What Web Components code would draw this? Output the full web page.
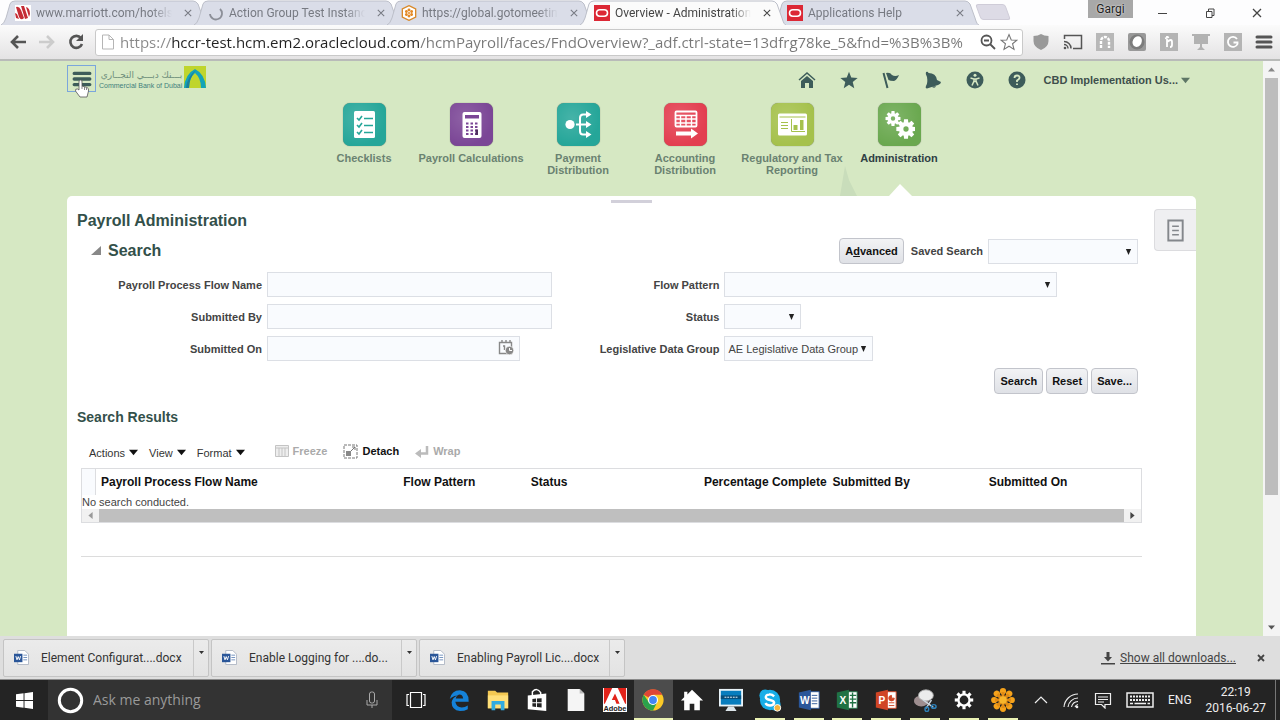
<!DOCTYPE html>
<html lang="en">
<head>
<meta charset="utf-8">
<title>Overview - Administration</title>
<style>
    html, body {
        height: 100%;
        margin: 0px;
    }
    body {
        font: 11px/12px "Liberation Sans", Arial, sans-serif;
        color: #444;
        --ui-font: Roboto, "Noto Sans", sans-serif;
        --input-font: "Open Sans", "Noto Sans", sans-serif;
    }
</style>
</head>
<body>
<payroll-screen></payroll-screen>

<template id="template-payroll-screen">
    <style>
        :host {
            display: flex;
            flex-direction: column;
            height: 100vh;
            overflow: hidden;
        }
        .tabs {
            display: flex;
            flex: none;
            height: 25px;
            background: #fdfdfe;
            font: 12px/16px var(--ui-font);
        }
        .new-tab {
            width: 28px;
            height: 14px;
            margin: 4px 0px 0px 12px;
            border: 1px solid #cfccd8;
            border-radius: 3px;
            background: #dddbe6;
            transform: skewX(20deg);
        }
        .profile {
            width: 45px;
            height: 18px;
            margin-left: auto;
            border: 0px;
            padding: 0px;
            background: #a8a8a8;
            color: #222;
            font: 12px/18px var(--ui-font);
            text-shadow: 0px 0px 2px #fff;
        }
        .window {
            display: flex;
            justify-content: space-around;
            align-items: center;
            width: 140px;
            padding-left: 7px;
        }
        .main {
            display: flex;
            flex: 1;
            min-height: 0px;
            background: #d6e8c3;
        }
        .page {
            flex: 1;
            display: flex;
            flex-direction: column;
            min-width: 0px;
            padding: 0px 67px;
        }
        nav {
            position: relative;
            display: flex;
            justify-content: center;
            flex: none;
            height: 93px;
            padding-top: 4px;
        }
        .shelf {
            display: flex;
            align-items: center;
            flex: none;
            gap: 2px;
            height: 43px;
            padding: 0px 14px 0px 3px;
            border-bottom: 1px solid #8b8b8b;
            background: #dedede;
            font: 12px/16px var(--ui-font);
        }
        .shelf a {
            display: flex;
            gap: 5px;
            align-items: center;
            margin-left: auto;
            margin-right: 18px;
            color: #444;
        }
    </style>
    <div class="tabs">
        <browser-tab icon="marriott">www.marriott.com/hotels/</browser-tab>
        <browser-tab icon="spinner">Action Group Test Instance</browser-tab>
        <browser-tab icon="flower">https://global.gotomeeting</browser-tab>
        <browser-tab icon="oracle" active>Overview - Administration</browser-tab>
        <browser-tab icon="oracle">Applications Help</browser-tab>
        <div class="new-tab"></div>
        <button class="profile">Gargi</button>
        <div class="window">
            <ui-icon name="minimize" size="10"></ui-icon>
            <ui-icon name="restore" size="10"></ui-icon>
            <ui-icon name="close" size="10"></ui-icon>
        </div>
    </div>
    <browser-toolbar></browser-toolbar>
    <div class="main">
        <div class="page">
            <global-header></global-header>
            <nav>
                <spring-item icon="checklist" color="#25a699">Checklists</spring-item>
                <spring-item icon="calculator" color="#7b4696">Payroll Calculations</spring-item>
                <spring-item icon="payment" color="#25a699">Payment Distribution</spring-item>
                <spring-item icon="accounting" color="#e33e50">Accounting Distribution</spring-item>
                <spring-item icon="reporting" color="#a5c14c">Regulatory and Tax Reporting</spring-item>
                <spring-item icon="gears" color="#6aa84f" active>Administration</spring-item>
            </nav>
            <work-panel></work-panel>
        </div>
        <page-scrollbar></page-scrollbar>
    </div>
    <div class="shelf">
        <download-item>Element Configurat....docx</download-item>
        <download-item>Enable Logging for ....do...</download-item>
        <download-item>Enabling Payroll Lic....docx</download-item>
        <a href="#downloads"><ui-icon name="download" size="14"></ui-icon>Show all downloads...</a>
        <ui-icon name="closeBold" size="10"></ui-icon>
    </div>
    <task-bar></task-bar>
</template>

<template id="template-browser-tab">
    <style>
        :host {
            display: grid;
            flex: 0 1 206px;
            min-width: 0px;
            margin-right: -13px;
            color: #777a82;
            --tab: #dadde8;
        }
        :host(:first-child) {
            margin-left: 1px;
        }
        :host([active]) {
            z-index: 1;
            color: #444;
            --tab: #fbfbfb;
        }
        :host > * {
            grid-area: 1 / 1;
        }
        .shape {
            width: 100%;
            height: 25px;
            fill: var(--tab);
            stroke: #bcbfc9;
        }
        .body {
            display: flex;
            align-items: center;
            gap: 5px;
            min-width: 0px;
            padding: 0px 15px 0px 14px;
        }
        .title {
            flex: 1;
            overflow: hidden;
            white-space: nowrap;
            margin-right: 7px;
            mask-image: linear-gradient(to left, transparent, #000 20px);
        }
    </style>
    <svg class="shape" viewBox="0 0 206 25" preserveAspectRatio="none">
        <path d="M0 25Q3 24 5 18L9 4Q10 1 14 1H192Q195 1 197 4L202 18Q204 25 206 25"/>
    </svg>
    <div class="body">
        <ui-icon size="16"></ui-icon>
        <span class="title"><slot></slot></span>
        <ui-icon name="close" size="8"></ui-icon>
    </div>
</template>

<template id="template-browser-toolbar">
    <style>
        :host {
            display: flex;
            align-items: center;
            flex: none;
            box-sizing: border-box;
            height: 36px;
            padding: 0px 7px 0px 9px;
            border-bottom: 2px solid #b9bbb9;
            background: linear-gradient(#fbfbfb, #e4e3e4);
            color: #555;
        }
        .keys, .tools {
            display: flex;
            align-items: center;
        }
        .keys {
            gap: 11px;
            width: 86px;
        }
        .box {
            display: flex;
            align-items: center;
            flex: 1;
            gap: 4px;
            height: 25px;
            padding: 0px 4px;
            border: 1px solid #c9c9c9;
            border-radius: 3px;
            background: #fff;
        }
        input {
            flex: 1;
            min-width: 0px;
            border: 0px;
            padding: 0px;
            outline: 0px;
            font: 15px/24px var(--input-font);
            color: #777;
            -webkit-text-fill-color: transparent;
            background: linear-gradient(to right, #888 51px, #222 51px, #222 300px, #777 300px);
            -webkit-background-clip: text;
            background-clip: text;
        }
        .tools {
            gap: 12px;
            margin-left: 8px;
        }
    </style>
    <div class="keys">
        <ui-icon name="back" size="18"></ui-icon>
        <ui-icon name="forward" size="18"></ui-icon>
        <ui-icon name="reload" size="18"></ui-icon>
    </div>
    <div class="box">
        <ui-icon name="file" size="16"></ui-icon>
        <input aria-label="Address" spellcheck="false" value="https://hccr-test.hcm.em2.oraclecloud.com/hcmPayroll/faces/FndOverview?_adf.ctrl-state=13dfrg78ke_5&amp;fnd=%3B%3B%">
        <ui-icon name="zoom" size="16"></ui-icon>
        <ui-icon name="starOutline" size="18"></ui-icon>
    </div>
    <div class="tools">
        <ui-icon name="shield" size="20"></ui-icon>
        <ui-icon name="cast" size="20"></ui-icon>
        <ui-icon name="extMagnet" size="20"></ui-icon>
        <ui-icon name="extEgg" size="20"></ui-icon>
        <ui-icon name="extHoney" size="20"></ui-icon>
        <ui-icon name="extBoard" size="20"></ui-icon>
        <ui-icon name="extGrammar" size="20"></ui-icon>
        <ui-icon name="menu" size="18"></ui-icon>
    </div>
</template>

<template id="template-global-header">
    <style>
        :host {
            position: relative;
            display: flex;
            align-items: center;
            flex: none;
            height: 38px;
            color: #3d5c5a;
        }
        button {
            border: 0px;
            padding: 0px;
            background: none;
            color: inherit;
            font: inherit;
        }
        .menu {
            display: flex;
            align-items: center;
            justify-content: center;
            width: 29px;
            height: 27px;
            margin: 0px 3px 3px 0px;
            border: 1px solid #7ba6dc;
        }
        .bank {
            margin-right: 2px;
            text-align: right;
            font-size: 7px;
            line-height: 9px;
            color: #3f7f7c;
        }
        .bank span {
            display: block;
            font: 9px/11px "DejaVu Sans", sans-serif;
            color: #6f8f7c;
        }
        .bank-mark {
            margin-bottom: 6px;
        }
        .links {
            display: flex;
            gap: 24px;
            margin-left: auto;
        }
        .user {
            display: flex;
            align-items: center;
            gap: 3px;
            margin: 0px 6px 0px 18px;
            font-weight: bold;
            color: #3e4f4c;
        }
        .user ui-icon {
            color: #5e7666;
        }
        .pointer {
            position: absolute;
            left: 6px;
            top: 18px;
        }
    </style>
    <button class="menu" aria-label="Navigator"><ui-icon name="menu" size="20"></ui-icon></button>
    <div class="bank"><span lang="ar" dir="rtl">بـــنك دبـــي التجــاري</span>Commercial Bank of Dubai</div>
    <ui-icon class="bank-mark" name="bank" size="22"></ui-icon>
    <div class="links">
        <ui-icon name="home" size="18"></ui-icon>
        <ui-icon name="star" size="18"></ui-icon>
        <ui-icon name="flag" size="18"></ui-icon>
        <ui-icon name="bell" size="18"></ui-icon>
        <ui-icon name="access" size="18"></ui-icon>
        <ui-icon name="help" size="18"></ui-icon>
    </div>
    <button class="user">CBD Implementation Us...<ui-icon name="down" size="9"></ui-icon></button>
    <ui-icon class="pointer" name="hand" size="19"></ui-icon>
</template>

<template id="template-spring-item">
    <style>
        :host {
            position: relative;
            display: flex;
            flex-direction: column;
            align-items: center;
            width: 107px;
            font-weight: bold;
            color: #6a8271;
        }
        :host([active]) {
            color: #2f4044;
        }
        .tile {
            display: grid;
            place-items: center;
            width: 43px;
            height: 43px;
            margin-bottom: 6px;
            border-radius: 7px;
            background: radial-gradient(circle at 35% 35%, rgba(255, 255, 255, 0.15), transparent 70%) var(--tile);
            box-shadow: 0px 0px 1px rgba(0, 0, 0, 0.5);
            color: #fff;
        }
        a {
            color: inherit;
            text-align: center;
            text-decoration: none;
        }
        .marker {
            display: none;
        }
        :host([active]) .marker {
            display: block;
            position: absolute;
            left: 0px;
            bottom: 0px;
            width: 66px;
            height: 32px;
            overflow: visible;
        }
    </style>
    <div class="tile"><ui-icon size="31"></ui-icon></div>
    <a href="#item"><slot></slot></a>
    <svg class="marker" viewBox="0 0 66 32">
        <path d="M-6 32L-1 2L3 16L11 32Z" fill="#c9ddbb"/>
        <path d="M43 32L54 20L66 32Z" fill="#fff"/>
    </svg>
</template>

<template id="template-work-panel">
    <style>
        :host {
            position: relative;
            display: block;
            flex: 1;
            padding: 15px 54px 0px 10px;
            border-radius: 5px 5px 0px 0px;
            background: #fff;
        }
        h1, h2, h3 {
            margin: 0px;
            color: #33504a;
            font-size: 16px;
            line-height: 20px;
        }
        h3 {
            font-size: 14px;
            margin-top: 13px;
        }
        .grip {
            position: absolute;
            left: calc(50% - 21px);
            top: 4px;
            width: 41px;
            height: 3px;
            background: #d2d0da;
        }
        .drawer {
            position: absolute;
            right: 0px;
            top: 13px;
            display: grid;
            place-items: center;
            width: 42px;
            height: 42px;
            border: 1px solid #dcdcdf;
            border-right: 0px;
            border-radius: 4px 0px 0px 4px;
            padding: 0px;
            background: #efeff1;
            color: #84878c;
        }
        .head {
            display: flex;
            align-items: center;
            margin: 7px 4px 8px 14px;
        }
        .head h2 {
            flex: 1;
            margin-left: 6px;
        }
        .head ui-button {
            margin-right: 7px;
        }
        form {
            display: grid;
            grid-template-columns: 45% 55%;
            row-gap: 7px;
            margin-right: 4px;
        }
        .left {
            --label: 185px;
        }
        .right {
            --label: 165px;
        }
        .actions {
            display: flex;
            justify-content: flex-end;
            gap: 3px;
            margin: 7px 4px 0px 0px;
        }
    </style>
    <div class="grip"></div>
    <button class="drawer" aria-label="Tasks"><ui-icon name="tasks" size="23"></ui-icon></button>
    <h1>Payroll Administration</h1>
    <div class="head">
        <ui-icon name="disclosed" size="11"></ui-icon>
        <h2>Search</h2>
        <ui-button>A<u>d</u>vanced</ui-button>
        <form-field type="select" label="Saved Search" width="150"></form-field>
    </div>
    <form>
        <form-field class="left" label="Payroll Process Flow Name" width="285"></form-field>
        <form-field class="right" type="select" label="Flow Pattern" width="333"></form-field>
        <form-field class="left" label="Submitted By" width="285"></form-field>
        <form-field class="right" type="select" label="Status" width="77"></form-field>
        <form-field class="left" type="date" label="Submitted On" width="253"></form-field>
        <form-field class="right" type="select" label="Legislative Data Group" value="AE Legislative Data Group" width="149"></form-field>
    </form>
    <div class="actions">
        <ui-button>Search</ui-button>
        <ui-button>Reset</ui-button>
        <ui-button>Save...</ui-button>
    </div>
    <h3>Search Results</h3>
    <results-table></results-table>
</template>

<template id="template-ui-button">
    <style>
        :host {
            display: block;
        }
        button {
            height: 26px;
            border: 1px solid #c2c4cb;
            border-radius: 4px;
            padding: 0px 5px;
            background: linear-gradient(#f2f3f5, #dfe1e6);
            color: #111;
            font: bold 11px/12px "Liberation Sans", Arial, sans-serif;
        }
    </style>
    <button type="button"><slot></slot></button>
</template>

<template id="template-form-field">
    <style>
        :host {
            display: grid;
            grid-template-columns: var(--label, auto) auto;
            justify-content: start;
            align-items: center;
            column-gap: 5px;
        }
        label {
            text-align: right;
            font-weight: bold;
            white-space: nowrap;
        }
        .control {
            display: grid;
            align-items: center;
            justify-items: end;
        }
        .control > * {
            grid-area: 1 / 1;
        }
        input, select {
            box-sizing: border-box;
            width: 100%;
            height: 25px;
            margin: 0px;
            border: 1px solid #dcdfe5;
            border-radius: 0px;
            padding: 0px 3px;
            outline: 0px;
            appearance: none;
            background: #f9fbfe;
            color: #444;
            font: inherit;
        }
        ui-icon {
            pointer-events: none;
            margin-right: 6px;
            color: #222;
        }
        input + ui-icon {
            margin-bottom: 3px;
            color: #888;
        }
    </style>
    <label for="control"></label>
    <div class="control"></div>
</template>

<template id="template-results-table">
    <style>
        :host {
            display: block;
            margin-left: 4px;
            padding-bottom: 33px;
            border-bottom: 1px solid #dcdcdc;
        }
        .bar {
            display: flex;
            align-items: center;
            height: 41px;
            padding-left: 8px;
        }
        .menus {
            display: flex;
            gap: 11px;
            padding-top: 10px;
        }
        .tools {
            display: flex;
            gap: 16px;
            margin-left: 30px;
            padding-top: 7px;
        }
        button {
            display: flex;
            align-items: center;
            gap: 4px;
            border: 0px;
            padding: 0px;
            background: none;
            color: #333;
            font: inherit;
        }
        .menus ui-icon {
            color: #111;
        }
        .tools button {
            font-weight: bold;
            color: #111;
        }
        .tools ui-icon {
            color: #777;
        }
        .tools button:disabled {
            color: #aaa;
        }
        .frame {
            border: 1px solid #dcdde0;
        }
        table {
            width: 100%;
            table-layout: fixed;
            border-collapse: collapse;
        }
        th {
            height: 26px;
            padding: 0px 5px;
            text-align: left;
            white-space: nowrap;
            font-size: 12px;
            color: #111;
        }
        th:first-child {
            width: 3px;
            border-right: 1px solid #dcdde0;
            background: #f9fbfe;
        }
        td {
            height: 14px;
            padding: 0px;
        }
        .scroll {
            display: flex;
            align-items: center;
            height: 13px;
            background: #f1f1f1;
        }
        .scroll div {
            flex: 1;
            height: 13px;
            background: #bfbfbf;
        }
        .scroll ui-icon {
            margin: 0px 5px;
        }
        .dim {
            opacity: 0.5;
        }
    </style>
    <div class="bar">
        <div class="menus">
            <button>Actions<ui-icon name="down" size="9"></ui-icon></button>
            <button>View<ui-icon name="down" size="9"></ui-icon></button>
            <button>Format<ui-icon name="down" size="9"></ui-icon></button>
        </div>
        <div class="tools">
            <button disabled><ui-icon name="freeze" size="14"></ui-icon>Freeze</button>
            <button><ui-icon name="detach" size="15"></ui-icon>Detach</button>
            <button disabled><ui-icon name="wrap" size="14"></ui-icon>Wrap</button>
        </div>
    </div>
    <div class="frame">
        <table>
            <thead>
                <tr>
                    <th></th>
                    <th style="width: 27.6%">Payroll Process Flow Name</th>
                    <th style="width: 11.1%">Flow Pattern</th>
                    <th style="width: 15.4%">Status</th>
                    <th style="width: 11.2%">Percentage Complete</th>
                    <th style="width: 13.8%">Submitted By</th>
                    <th>Submitted On</th>
                </tr>
            </thead>
            <tbody>
                <tr><td colspan="7">No search conducted.</td></tr>
            </tbody>
        </table>
        <div class="scroll">
            <ui-icon class="dim" name="left" size="7"></ui-icon>
            <div></div>
            <ui-icon name="right" size="7"></ui-icon>
        </div>
    </div>
</template>

<template id="template-page-scrollbar">
    <style>
        :host {
            display: flex;
            flex-direction: column;
            align-items: center;
            justify-content: space-between;
            width: 17px;
            background: #f4f4f4;
            color: #555;
        }
        ui-icon {
            margin: 5px 0px;
        }
        .track {
            flex: 1;
        }
        .thumb {
            width: 13px;
            height: 77%;
            background: #bdbdbd;
        }
    </style>
    <ui-icon name="up" size="7"></ui-icon>
    <div class="track"><div class="thumb"></div></div>
    <ui-icon name="down" size="7"></ui-icon>
</template>

<template id="template-download-item">
    <style>
        :host {
            display: flex;
            box-sizing: border-box;
            width: 206px;
            height: 38px;
            border: 1px solid #c4c4c4;
            border-radius: 2px;
            background: linear-gradient(#ebebeb, #e3e3e3);
        }
        button {
            display: flex;
            align-items: center;
            border: 0px;
            padding: 0px;
            background: none;
            color: #333;
            font: inherit;
        }
        .file {
            flex: 1;
            gap: 12px;
            padding-left: 10px;
            white-space: nowrap;
        }
        .more {
            align-items: flex-start;
            justify-content: center;
            width: 15px;
            padding-top: 10px;
            border-left: 1px solid #c9c9c9;
        }
    </style>
    <button class="file"><ui-icon name="docx" size="15"></ui-icon><slot></slot></button>
    <button class="more" aria-label="More"><ui-icon name="down" size="5"></ui-icon></button>
</template>

<template id="template-task-bar">
    <style>
        :host {
            display: flex;
            flex: none;
            height: 40px;
            background: #242424;
            color: #eee;
            font: 12px/16px var(--ui-font);
        }
        .start, .view {
            display: grid;
            place-items: center;
            width: 48px;
            border: 0px;
            padding: 0px;
            background: none;
            color: #fff;
        }
        .search {
            display: flex;
            align-items: center;
            gap: 9px;
            box-sizing: border-box;
            width: 344px;
            padding: 0px 11px 0px 9px;
            background: #333;
            color: #aaa;
        }
        input {
            flex: 1;
            min-width: 0px;
            border: 0px;
            padding: 0px;
            outline: 0px;
            background: none;
            color: #fff;
            font: 14px/20px var(--input-font);
        }
        input::placeholder {
            color: #9a9a9a;
        }
        .apps {
            display: flex;
            flex: 1;
        }
        .tray {
            display: flex;
            align-items: center;
            box-sizing: border-box;
            width: 258px;
            padding-left: 12px;
        }
        .tray ui-icon + ui-icon {
            margin-left: 14px;
        }
        .lang {
            margin-left: 14px;
        }
        .clock {
            margin-left: auto;
            padding-right: 9px;
            text-align: center;
        }
        .edge {
            width: 4px;
            height: 100%;
            border-left: 1px solid #777;
        }
    </style>
    <button class="start" aria-label="Start"><ui-icon name="windows" size="17"></ui-icon></button>
    <div class="search">
        <ui-icon name="cortana" size="27"></ui-icon>
        <input aria-label="Ask me anything" placeholder="Ask me anything">
        <ui-icon name="mic" size="18"></ui-icon>
    </div>
    <button class="view" aria-label="Task view"><ui-icon name="taskView" size="20"></ui-icon></button>
    <div class="apps">
        <task-button icon="edge"></task-button>
        <task-button icon="folder"></task-button>
        <task-button icon="store"></task-button>
        <task-button icon="blank"></task-button>
        <task-button icon="adobe"></task-button>
        <task-button icon="chrome" current running></task-button>
        <task-button icon="house"></task-button>
        <task-button icon="lenovo"></task-button>
        <task-button icon="skype" running></task-button>
        <task-button icon="word" running></task-button>
        <task-button icon="excel" running></task-button>
        <task-button icon="powerpoint" running></task-button>
        <task-button icon="snip" running></task-button>
        <task-button icon="settings" running></task-button>
        <task-button icon="meeting" running></task-button>
    </div>
    <div class="tray">
        <ui-icon name="chevron" size="14"></ui-icon>
        <ui-icon name="wifi" size="18"></ui-icon>
        <ui-icon name="message" size="18"></ui-icon>
        <ui-icon name="keyboard" size="28"></ui-icon>
        <span class="lang">ENG</span>
        <div class="clock">22:19<br>2016-06-27</div>
        <div class="edge"></div>
    </div>
</template>

<template id="template-task-button">
    <style>
        :host {
            display: flex;
            flex: 1;
        }
        button {
            display: flex;
            flex: 1;
            flex-direction: column;
            align-items: center;
            justify-content: space-between;
            border: 0px;
            padding: 8px 0px 0px;
            background: none;
        }
        :host([current]) button {
            background: #4c4c4c;
        }
        .line {
            width: 30px;
            height: 2px;
        }
        :host([current]) .line {
            width: 100%;
        }
        :host([running]) .line {
            background: #eaf2b4;
        }
    </style>
    <button><ui-icon size="24"></ui-icon><div class="line"></div></button>
</template>

<script>
    (function() {
        // name: [viewBox, markup]
        const office = (color, letter, page) => ['0 0 26 26', `<path d="M13 4H24V22H13Z" fill="#fff" stroke="${color}"/>${page}<path d="M2 5L15 2V24L2 21Z" fill="${color}"/><text x="8.5" y="17" font-family="Liberation Sans" font-weight="bold" font-size="11" text-anchor="middle" fill="#fff">${letter}</text>`];
        const petals = (count, markup) => Array.from({ length: count }, (_, i) => `<g transform="rotate(${i * 360 / count} 12 12)">${markup}</g>`).join('');
        const gear = (x, y, s, hole) => `<g transform="translate(${x} ${y}) scale(${s}) translate(-12 -12)">${petals(8, '<path d="M9.8 1H14.2L14.8 7H9.2Z"/>')}<circle cx="12" cy="12" r="5.5" fill="none" stroke="currentColor" stroke-width="${hole}"/></g>`;
        const line = 'fill="none" stroke="currentColor"';
        const ICONS = {
            marriott: ['0 0 16 16', '<path d="M0 0H16V16H0Z" fill="#fff"/><path d="M1 2Q4 1 6 5L9 13Q6 16 4 12ZM6 1L9 1L13 13L10 14ZM11 2Q15 3 15 9L14 12Z" fill="#c52b35"/><path d="M0 8L2 9L4 14L1 13Z" fill="#c52b35"/>'],
            spinner: ['0 0 16 16', '<path d="M2 9A6 6 0 1 0 12 4" fill="none" stroke="#8c8f98" stroke-width="1.8"/>'],
            flower: ['0 0 24 24', `<path d="M12 1L22 6V18L12 23L2 18V6Z" fill="#fff" stroke="#d98a2b" stroke-width="2"/>${petals(6, '<circle cx="12" cy="7.5" r="2.2" fill="#e58a25"/>')}<circle cx="12" cy="12" r="1.5" fill="#e58a25"/>`],
            oracle: ['0 0 16 16', '<path d="M0 0H16V16H0Z" fill="#dc2835"/><rect x="2.5" y="4.7" width="11" height="6.6" rx="3.3" fill="none" stroke="#fff" stroke-width="1.6"/>'],
            minimize: ['0 0 10 10', `<path d="M0 5.5H9" ${line}/>`],
            restore: ['0 0 10 10', `<path d="M1.5 3.5H7V9.5H1.5ZM3.5 3V1H9V7.5H7" ${line}/>`],
            close: ['0 0 10 10', `<path d="M1 1L9 9M9 1L1 9" ${line} stroke-width="1.3"/>`],
            closeBold: ['0 0 10 10', `<path d="M2 2L8 8M8 2L2 8" ${line} stroke-width="1.8"/>`],
            back: ['0 0 18 18', `<path d="M17 9H3M9 3L3 9L9 15" ${line} stroke-width="2.6"/>`],
            forward: ['0 0 18 18', '<path d="M1 9H15M9 3L15 9L9 15" fill="none" stroke="#ccc" stroke-width="2.6"/>'],
            reload: ['0 0 18 18', `<path d="M14 5A6 6 0 1 0 15 11" ${line} stroke-width="2.6"/><path d="M16 1V8H9Z"/>`],
            file: ['0 0 16 16', '<path d="M2.5 1H9L13.5 5.5V15H2.5ZM9 1V5.5H13.5" fill="#fff" stroke="#b5b5b5"/>'],
            zoom: ['0 0 16 16', `<circle cx="6.5" cy="6.5" r="5" ${line} stroke-width="1.8"/><path d="M10 10L15 15M4 6.5H9" ${line} stroke-width="1.8"/>`],
            starOutline: ['0 0 24 24', '<path d="M12 2L15 9.2L22.5 9.6L16.7 14.3L18.7 21.8L12 17.6L5.3 21.8L7.3 14.3L1.5 9.6L9 9.2Z" fill="none" stroke="#777" stroke-width="1.4"/>'],
            shield: ['0 0 20 20', '<path d="M10 2Q13 4 17.5 4V9Q17.500 15 10 18Q2.500 15 2.500 9V4Q7 4 10 2Z" fill="#999"/>'],
            cast: ['0 0 20 20', `<path d="M1.500 7V3.500H18.500V16.500H10" ${line} stroke-width="1.500"/><path d="M1 9.500A7 7 0 0 1 8 16.500M1 12.500A4 4 0 0 1 5 16.500" ${line} stroke-width="1.500"/><circle cx="2" cy="16" r="1.300"/>`],
            extMagnet: ['0 0 20 20', '<path d="M1 1H19V19H1Z" fill="#b8b8b8"/><path d="M6 16V9A4 4 0 0 1 14 9V16" fill="none" stroke="#fff" stroke-width="2.400" stroke-dasharray="3 1"/>'],
            extEgg: ['0 0 20 20', '<rect x="1" y="1" width="18" height="18" rx="2" fill="#999"/><circle cx="10" cy="10" r="7.500" fill="#7c7c7c"/><ellipse cx="10" cy="9.500" rx="4.500" ry="5.500" fill="#fff" transform="rotate(25 10 10)"/>'],
            extHoney: ['0 0 20 20', '<path d="M1 1H19V19H1Z" fill="#b4b4b4"/><path d="M8 4V15M6 6.500L10 5M8 10Q13 6 13 10V13Q13 15 11 15" fill="none" stroke="#fff" stroke-width="1.800"/>'],
            extBoard: ['0 0 20 20', '<path d="M1 2H19V4H17V12H11V15L14 18H6L9 15V12H3V4H1Z" fill="#b2b2b2"/>'],
            extGrammar: ['0 0 20 20', '<path d="M1 1H19V19H1Z" fill="#b4b4b4"/><path d="M14 7A5 5 0 1 0 14.500 12V10.500H10.500" fill="none" stroke="#fff" stroke-width="1.800"/>'],
            menu: ['0 0 18 18', `<path d="M2 4H16M2 9H16M2 14H16" ${line} stroke-width="3" stroke-linecap="round"/>`],
            bank: ['0 0 22 22', '<path d="M0 0H22V22H0Z" fill="#bfd52d"/><path d="M0 22Q1 8 11 3Q21 8 22 22H17Q17 12 11 7Q5 12 5 22Z" fill="#13a3b8"/><path d="M2 22Q3 11 12 4Q5 12 5 22Z" fill="#1a7f9c"/>'],
            home: ['0 0 18 18', `<path d="M1 9L9 2L17 9" ${line} stroke-width="1.500"/><path d="M3 10L9 5L15 10V17H11V12H7V17H3Z"/>`],
            star: ['0 0 24 24', '<path d="M12 1L15 8.700L23.500 9.200L17 14.500L19 23L12 18.300L5 23L7 14.500L.5 9.200L9 8.700Z"/>'],
            flag: ['0 0 18 18', `<path d="M1.500 2L5.500 17" ${line} stroke-width="2"/><path d="M4 2Q8 1 10 4Q13 6 17 4Q15 9 12 10Q8 10 6.500 9Z"/>`],
            bell: ['0 0 18 18', '<path d="M2 1Q4 0 4.500 2Q12 2 13 9L17 11Q17 13 14 14L3 17.500Q1 17 2 15Q4 12 3 6Q1 3 2 1ZM8 16L12 15Q11 18 8 16Z"/>'],
            access: ['0 0 18 18', '<circle cx="9" cy="9" r="8.500"/><circle cx="9" cy="4.300" r="1.500" fill="#d6e8c3"/><path d="M4.500 7L8 8V10L6 14.500M13.500 7L10 8V10L12 14.500M8 8H10V10.500H8Z" fill="none" stroke="#d6e8c3" stroke-width="1.500"/>'],
            help: ['0 0 18 18', '<circle cx="9" cy="9" r="8.500"/><path d="M6.500 7Q6.500 4.500 9 4.500Q11.700 4.500 11.500 7Q11 8.500 9 9.500V11M9 12.500V14" fill="none" stroke="#d6e8c3" stroke-width="1.800"/>'],
            down: ['0 0 10 10', '<path d="M0 2H10L5 8Z"/>'],
            select: ['0 0 8 8', '<path d="M1 1H7L4 8Z"/>'],
            up: ['0 0 10 10', '<path d="M0 8H10L5 2Z" fill="#888"/>'],
            left: ['0 0 10 10', '<path d="M8 0V10L2 5Z"/>'],
            right: ['0 0 10 10', '<path d="M2 0V10L8 5Z"/>'],
            hand: ['0 0 19 19', '<path d="M6 11V2Q7.500 0 9 2V7L14 8.500Q16 9 15.500 12L14 18H7L2.500 12Q2 9.500 4.500 10Z" fill="#fff" stroke="#555" stroke-width=".8"/><path d="M9 7V10M11.500 8V11M13.500 9V11" stroke="#555" stroke-width=".7"/>'],
            checklist: ['0 0 31 31', '<rect x="5" y="2" width="21" height="27" rx="1.500"/><path d="M8 9L10 11L13 7M8 16L10 18L13 14M8 23L10 25L13 21M15 9.500H24M15 16.500H24M15 23.500H24" fill="none" stroke="#25a699" stroke-width="1.600"/>'],
            calculator: ['0 0 31 31', '<rect x="6.500" y="3" width="19" height="26" rx="2"/><path d="M9 6H23V9.500H9Z" fill="#7b4696"/><path d="M10 14.500H23M10 18H23M10 21.500H23M10 25H23" fill="none" stroke="#7b4696" stroke-width="2" stroke-dasharray="2.500 2"/><path d="M19.500 20.500H22V26H19.500Z" fill="#503060"/>'],
            payment: ['0 0 31 31', `<circle cx="7" cy="15.500" r="4.600"/><path d="M13 15.500H25M24 5.500H20Q17 5.500 17 9V22Q17 25.500 20 25.500H24" ${line} stroke-width="2"/><path d="M23 2L28.500 5.500L23 9ZM23 12L28.500 15.500L23 19ZM23 22L28.500 25.500L23 29Z"/>`],
            accounting: ['0 0 31 31', `<rect x="5.500" y="2.500" width="21" height="15" rx="1" ${line} stroke-width="1.800"/><path d="M5 6.500H27M5 10H27M5 14H27M10.500 6V18M16 6V18M21.500 6V18" ${line} stroke-width="1.400"/><path d="M6 22.500H21V19.500L28 24.500L21 29.500V26.500H6Z"/>`],
            reporting: ['0 0 31 31', '<rect x="1" y="4.500" width="29" height="22" rx="1.500"/><path d="M2.500 8H28.500M4 13.500H11M4 16.500H11M4 19.500H11" stroke="#a5c14c"/><path d="M14.500 10V22.500H28" fill="none" stroke="#a5c14c"/><path d="M16.500 16H20.500V21H16.500ZM23 11H26.500V21H23Z" fill="#a5c14c"/>'],
            gears: ['0 0 31 31', gear(9, 9.5, .68, 4.5) + gear(22, 20, .88, 5)],
            tasks: ['0 0 24 24', `<path d="M4.500 1.500H19.500V22.500H4.500Z" ${line} stroke-width="2"/><path d="M8.500 7.500H15.500M8.500 12H15.500M8.500 16.500H15.500" ${line} stroke-width="1.500"/>`],
            disclosed: ['0 0 11 11', '<path d="M10 0V9H0Z" fill="#888"/>'],
            calendar: ['0 0 16 16', `<path d="M1.500 3.500H13.500V14.500H1.500ZM4 1V4M8 1V4M12 1V4M5 7H6.500V11" ${line} stroke-width="1.400"/><circle cx="11.500" cy="11.500" r="4.200" stroke="#fff" stroke-width=".6"/><path d="M11.500 9V11.500H14" fill="none" stroke="#fff"/>`],
            freeze: ['0 0 14 14', '<path d="M.5 1.500H13.500V12.500H.5ZM.5 4H13.500M4 4V12.500M7 4V12.500M10 4V12.500" fill="#eee" stroke="#c4c4c4"/>'],
            detach: ['0 0 15 15', `<path d="M1 1H14V14H1Z" ${line} stroke-dasharray="3 1"/><path d="M3 7H8V12H3Z" fill="#888"/><path d="M8 7L12 3M9 3H12V6" ${line}/>`],
            wrap: ['0 0 14 14', '<path d="M12 2V9.500H4" fill="none" stroke="#bbb" stroke-width="2.500"/><path d="M6 5V14L0 9.500Z" fill="#bbb"/>'],
            docx: ['0 0 16 16', '<path d="M4 .5H11.500L15.500 4.500V15.500H4Z" fill="#fff" stroke="#b0b8c4"/><path d="M10 5.500H14M10 8H14M10 10.500H14" stroke="#6f8fbd"/><path d="M0 4H9V13H0Z" fill="#2a5699"/><path d="M2 6.500L3.200 10.500L4.500 7L5.800 10.500L7 6.500" fill="none" stroke="#fff"/>'],
            download: ['0 0 14 14', '<path d="M5.500 1H8.500V6H11L7 10.500L3 6H5.500ZM0 12H14V13.500H0Z"/>'],
            windows: ['0 0 18 18', '<path d="M0 2.500L8 1.400V8.500H0ZM9 1.200L18 0V8.500H9ZM0 9.500H8V16.600L0 15.500ZM9 9.500H18V18L9 16.800Z" fill="#fff"/>'],
            cortana: ['0 0 27 27', '<circle cx="13.500" cy="13.500" r="11.200" fill="none" stroke="#fff" stroke-width="3"/>'],
            mic: ['0 0 18 18', `<rect x="6.500" y="1" width="5" height="11" rx="2" ${line}/><path d="M4 9V14H14V9M9 14V17" ${line}/>`],
            taskView: ['0 0 20 20', `<path d="M4.500 2.500H15.500V17.500H4.500ZM3 4.500H1V15.500H3M17 4.500H19V15.500H17" ${line} stroke-width="1.200"/>`],
            edge: ['0 0 26 26', '<path d="M3 12Q5 2.500 14 2.500Q24 3 23.500 15H9Q10 21 16 21Q19.500 21 22.500 19V23Q19 25 14 25Q5 24 5 15.500Q5.500 11 11 8Q5 9 3 12ZM9.500 11.500H17.500Q17 7 13.500 7Q10 8 9.500 11.500Z" fill="#1582d8"/>'],
            folder: ['0 0 26 26', '<path d="M2 3H10L12 5H24V22H2Z" fill="#f3c852"/><path d="M2 8H24V22H2Z" fill="#ffdf79"/><path d="M6 14H20V24H16V18H10V24H6Z" fill="#2fabe1"/>'],
            store: ['0 0 26 26', '<path d="M8 8V4Q13 -1 17 5V8" fill="none" stroke="#fff" stroke-width="1.600"/><path d="M3 8L23 6V25L3 23Z" fill="#fff"/><path d="M8 12L12 11.500V15.500H8ZM13 11.400L18 11V15.500H13ZM8 16.500H12V20.500L8 20ZM13 16.500H18V21L13 20.600Z" fill="#242424"/>'],
            blank: ['0 0 26 26', '<path d="M4 1H17L22 6V25H4Z" fill="#f5f5f5"/><path d="M17 1V6H22Z" fill="#bbb"/>'],
            adobe: ['0 0 26 26', '<path d="M0 0H26V26H0Z" fill="#fff"/><path d="M1 0H10L2 17H1ZM25 0H16L24 17H25ZM13 6L18 17H14.500L13 13H9.500Z" fill="#e2231a"/><text x="13" y="25" font-family="Liberation Sans" font-size="8" font-weight="bold" text-anchor="middle" fill="#222">Adobe</text>'],
            chrome: ['0 0 26 26', '<circle cx="13" cy="13" r="11.500" fill="#fbc927"/><path d="M13 13L3 7.300A11.500 11.500 0 0 1 23 7.300H13Z" fill="#df4536"/><path d="M3 7.300A11.500 11.500 0 0 0 13 24.500L17.500 15.500L13 13L8.500 15.500Z" fill="#2ba24c"/><circle cx="13" cy="13" r="5.400" fill="#fff"/><circle cx="13" cy="13" r="4.200" fill="#4285f4"/>'],
            house: ['0 0 26 26', '<path d="M13 2L25 13.500H21.500V24H15.500V17H10.500V24H4.500V13.500H1L4.500 10V4H8V7Z" fill="#fff"/>'],
            lenovo: ['0 0 26 26', '<path d="M0 1H26V20H0Z" fill="#e9f3f8"/><path d="M2 3H24V18H2Z" fill="#087dbe"/><path d="M2 8H24V12H2Z" fill="#064d7a"/><path d="M6 10H20" stroke="#fff" stroke-dasharray="2 1"/><path d="M10 20H16L19 25H7Z" fill="#dce5ea"/>'],
            skype: ['0 0 26 26', '<circle cx="13" cy="13" r="11" fill="#18aee8"/><circle cx="8" cy="8" r="6.500" fill="#18aee8"/><circle cx="18" cy="18" r="6.500" fill="#18aee8"/><path d="M17.500 9Q15 6.500 12 7Q8 7.500 8.500 10.500Q9 12.300 13 13Q17.500 14 17.500 16Q17 19 13 19Q9.500 19 8 16.500" fill="none" stroke="#fff" stroke-width="2.600"/><circle cx="21" cy="21.500" r="3.600" fill="#f5b53c" stroke="#fff"/>'],
            word: office('#2a5699', 'W', '<path d="M16 8H22M16 11H22M16 14H22M16 17H22" stroke="#2a5699"/>'),
            excel: office('#207245', 'X', '<path d="M16 8H23M16 12H23M16 16H23M19 5V21" stroke="#207245" stroke-width="1.500"/>'),
            powerpoint: office('#d04525', 'P', '<path d="M19 8A3 3 0 1 0 22 11H19ZM16 16H22M16 19H22" fill="#d04525" stroke="#d04525"/>'),
            snip: ['0 0 26 26', '<ellipse cx="9" cy="14" rx="8" ry="6" fill="#9e8e90"/><ellipse cx="14" cy="8" rx="8" ry="6" fill="#ececec" stroke="#aaa"/><path d="M11 13L22 21M20 13L14 22" stroke="#ccd6df" stroke-width="1.500"/><ellipse cx="22.500" cy="20" rx="2.500" ry="2" fill="none" stroke="#2d80b9" stroke-width="1.600"/><ellipse cx="15" cy="23" rx="2" ry="2.500" fill="none" stroke="#2d80b9" stroke-width="1.600"/>'],
            settings: ['0 0 26 26', `<g fill="#fff" transform="translate(1 1)">${petals(8, '<path d="M10.300 2H13.700V6H10.300Z"/>')}<circle cx="12" cy="12" r="6" fill="none" stroke="#fff" stroke-width="2.500"/></g>`],
            meeting: ['0 0 24 24', petals(8, '<circle cx="12" cy="3.200" r="3.100" fill="#f5a21b"/><path d="M10.500 4H13.500V11H10.500Z" fill="#e08a14"/>') + '<circle cx="12" cy="12" r="3.800" fill="#f8b62b"/>'],
            chevron: ['0 0 14 14', `<path d="M1 10L7 4L13 10" ${line} stroke-width="1.200"/>`],
            wifi: ['0 0 18 18', `<path d="M2 16A14 14 0 0 1 16 3M6 16A10 10 0 0 1 16 7M9.500 16A7 7 0 0 1 16 10.500M13 16A4 4 0 0 1 16 13.500" ${line} stroke-width="1.100"/><circle cx="15" cy="16" r="1.300"/>`],
            message: ['0 0 18 18', `<path d="M1.500 2.500H16.500V13.500H11V17L7.500 13.500H1.500ZM4 6H14M4 8.500H14M4 11H10" ${line} stroke-width="1.200"/>`],
            keyboard: ['0 0 28 28', `<path d="M1 7H27V21H1Z" ${line} stroke-width="1.500"/><path d="M4 10.500H25M4 14H25" ${line} stroke-width="2" stroke-dasharray="2 1"/><path d="M4 17.500H7M8.500 17.500H20M21.500 17.500H24" ${line} stroke-width="1.500"/>`]
        };

        class TemplateElement extends HTMLElement {
            constructor() {
                super();
                const template = document.getElementById('template-' + this.localName);
                this.attachShadow({ mode: 'open' }).appendChild(template.content.cloneNode(true));
            }
        }

        // element that hands its icon attribute to the first ui-icon inside
        class IconHolder extends TemplateElement {
            connectedCallback() {
                this.shadowRoot.querySelector('ui-icon').setAttribute('name', this.getAttribute('icon'));
            }
        }

        customElements.define('ui-icon', class extends HTMLElement {
            static observedAttributes = ['name'];
            constructor() {
                super();
                this.attachShadow({ mode: 'open' });
            }
            attributeChangedCallback() {
                this.draw();
            }
            connectedCallback() {
                this.draw();
            }
            draw() {
                const icon = ICONS[this.getAttribute('name')];
                const size = this.getAttribute('size') || 16;
                if (!icon) return;
                this.shadowRoot.innerHTML = `
                    <style>
                        :host { display: block; flex: none; }
                        svg { display: block; fill: currentColor; }
                    </style>
                    <svg width="${size}" height="${size}" viewBox="${icon[0]}" aria-hidden="true">${icon[1]}</svg>
                `;
            }
        });

        customElements.define('browser-tab', class extends IconHolder {});

        customElements.define('task-button', class extends IconHolder {
            connectedCallback() {
                super.connectedCallback();
                this.shadowRoot.querySelector('button').setAttribute('aria-label', this.getAttribute('icon'));
            }
        });

        customElements.define('spring-item', class extends IconHolder {
            connectedCallback() {
                super.connectedCallback();
                this.style.setProperty('--tile', this.getAttribute('color'));
            }
        });

        customElements.define('form-field', class extends TemplateElement {
            connectedCallback() {
                const type = this.getAttribute('type');
                const control = this.shadowRoot.querySelector('.control');
                this.shadowRoot.querySelector('label').textContent = this.getAttribute('label');
                control.style.width = this.getAttribute('width') + 'px';
                if (type === 'select') {
                    control.innerHTML = `<select id="control"><option>${this.getAttribute('value') || ''}</option></select><ui-icon name="select" size="7"></ui-icon>`;
                } else {
                    control.innerHTML = '<input id="control" type="text">' + (type === 'date' ? '<ui-icon name="calendar" size="16"></ui-icon>' : '');
                }
            }
        });

        ['ui-button', 'download-item', 'browser-toolbar', 'global-header', 'results-table', 'work-panel', 'page-scrollbar', 'task-bar', 'payroll-screen'].forEach(name => {
            customElements.define(name, class extends TemplateElement {});
        });
    })();
</script>
</body>
</html>
